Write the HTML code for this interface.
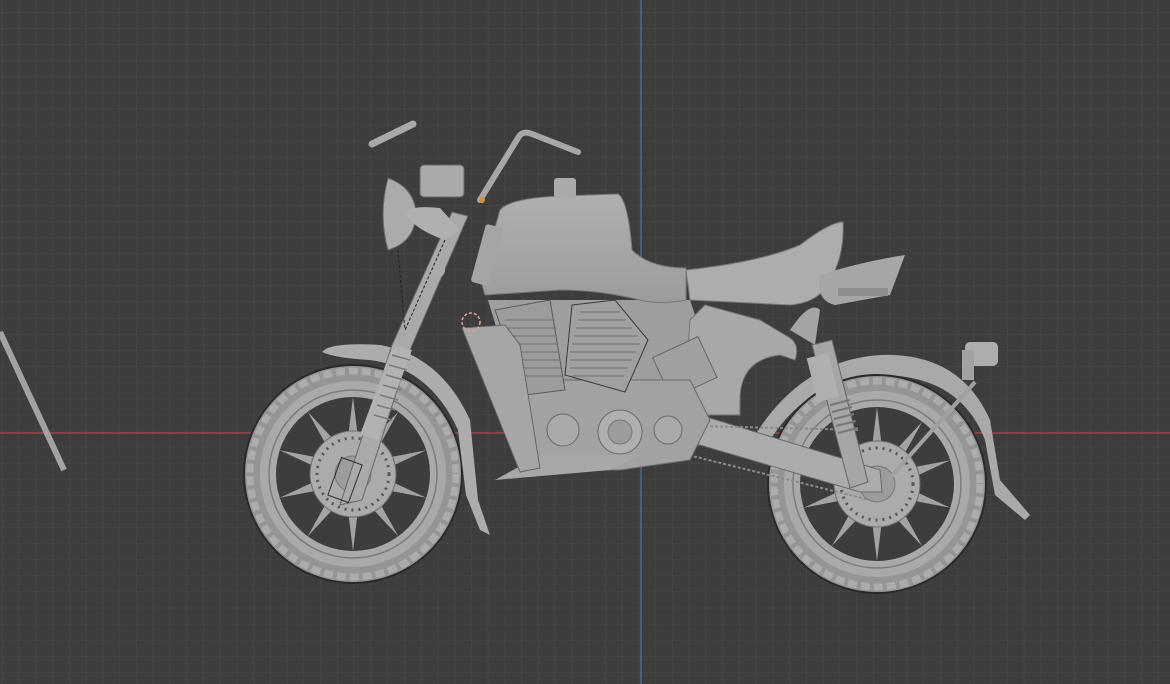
<!DOCTYPE html>
<html><head><meta charset="utf-8"><style>
html,body{margin:0;padding:0;background:#3d3d3d;overflow:hidden}
svg{display:block}
</style></head><body>
<svg width="1170" height="684" viewBox="0 0 1170 684" xmlns="http://www.w3.org/2000/svg">
<defs>
<pattern id="g" x="2" y="12" width="16.75" height="16.1" patternUnits="userSpaceOnUse">
<path d="M0 0H16.75M0 0V16.1" stroke="#484848" stroke-width="1.2" fill="none"/>
</pattern>
<linearGradient id="tk" x1="0" y1="0" x2="0" y2="1"><stop offset="0" stop-color="#b0b0b0"/><stop offset="1" stop-color="#9c9c9c"/></linearGradient>
<g id="wheel">
<circle r="109" fill="#959595" stroke="#2a2a2a" stroke-width="2"/>
<circle r="103" fill="none" stroke="#acacac" stroke-width="7" stroke-dasharray="9 4"/>
<circle r="93" fill="#a9a9a9"/>
<circle r="84" fill="none" stroke="#7c7c7c" stroke-width="1.5"/>
<circle r="77" fill="#3d3d3d"/>
<g fill="#a3a3a3">
<path d="M-7 -20 L0 -77 L7 -20Z"/><path d="M-7 -20 L0 -77 L7 -20Z" transform="rotate(36)"/>
<path d="M-7 -20 L0 -77 L7 -20Z" transform="rotate(72)"/><path d="M-7 -20 L0 -77 L7 -20Z" transform="rotate(108)"/>
<path d="M-7 -20 L0 -77 L7 -20Z" transform="rotate(144)"/><path d="M-7 -20 L0 -77 L7 -20Z" transform="rotate(180)"/>
<path d="M-7 -20 L0 -77 L7 -20Z" transform="rotate(216)"/><path d="M-7 -20 L0 -77 L7 -20Z" transform="rotate(252)"/>
<path d="M-7 -20 L0 -77 L7 -20Z" transform="rotate(288)"/><path d="M-7 -20 L0 -77 L7 -20Z" transform="rotate(324)"/>
</g>
<circle r="43" fill="#ababab" stroke="#6e6e6e"/>
<circle r="36" fill="none" stroke="#555" stroke-width="3" stroke-dasharray="2 5"/>
<circle r="18" fill="#9c9c9c" stroke="#777"/>
</g>
</defs>
<rect width="1170" height="684" fill="#3d3d3d"/>
<rect width="1170" height="684" fill="url(#g)"/>
<line x1="0" y1="433" x2="1170" y2="433" stroke="#9a4650" stroke-width="1.5"/>
<line x1="641" y1="0" x2="641" y2="684" stroke="#4b6a9e" stroke-width="1.5"/>
<line x1="0" y1="332" x2="64" y2="470" stroke="#a2a2a2" stroke-width="6"/>

<!-- rear fender -->
<path d="M752 440 Q800 360 880 355 Q960 352 990 420 L1000 480 L1030 515 L1025 520 L995 495 L985 440 Q960 375 880 375 Q810 378 770 440Z" fill="#a9a9a9"/>
<use href="#wheel" x="877" y="484"/>
<use href="#wheel" x="353" y="474"/>
<!-- front fender -->
<path d="M322 352 Q330 342 380 345 Q440 355 470 420 L478 500 L490 535 L480 530 L466 495 L458 430 Q430 368 370 360 Q335 358 322 352Z" fill="#acacac"/>

<!-- tail light -->
<rect x="965" y="342" width="33" height="24" rx="5" fill="#adadad"/>
<rect x="962" y="350" width="12" height="30" fill="#a2a2a2"/>
<line x1="975" y1="382" x2="888" y2="480" stroke="#a0a0a0" stroke-width="4"/>

<!-- frame fill behind engine -->
<path d="M488 300 L690 300 L700 330 L690 415 L700 440 L650 460 L600 470 L540 470 L500 340Z" fill="#9e9e9e"/>
<!-- swingarm -->
<path d="M650 420 L700 415 L880 470 L882 492 L860 492 L700 445 L655 445Z" fill="#acacac" stroke="#6a6a6a"/>
<path d="M660 425 L860 430 M660 448 L870 500" stroke="#8a8a8a" stroke-width="2" stroke-dasharray="3 2"/>
<!-- rear shock -->
<path d="M812 345 L832 340 L868 482 L850 488Z" fill="#a6a6a6" stroke="#666"/>
<rect x="812" y="355" width="22" height="45" fill="#b0b0b0" transform="rotate(-14 823 378)"/>
<path d="M830 405 L850 400 M832 412 L852 407 M834 419 L854 414 M836 426 L856 421 M838 433 L858 428" stroke="#777" stroke-width="2"/>

<!-- side panel -->
<path d="M705 305 L760 320 L790 338 Q800 345 795 360 L780 355 Q740 360 740 400 L740 415 L705 415 L685 395 L690 320Z" fill="#a8a8a8" stroke="#747474"/>
<path d="M790 330 Q810 300 820 310 L815 345 Z" fill="#a4a4a4"/>
<rect x="660" y="345" width="50" height="45" fill="#a0a0a0" stroke="#666" transform="rotate(-25 685 368)"/>

<!-- engine -->
<path d="M515 380 L690 380 L710 420 L690 460 L620 470 L545 470 L520 440Z" fill="#a2a2a2" stroke="#6a6a6a"/>
<path d="M495 310 L550 300 L565 390 L525 395Z" fill="#9c9c9c" stroke="#5a5a5a"/>
<path d="M572 305 L615 300 L648 340 L625 392 L565 375Z" fill="#a0a0a0" stroke="#3a3a3a"/>
<g stroke="#7a7a7a" stroke-width="1.2">
<path d="M505 320H555M505 328H556M506 336H557M507 344H558M508 352H559M509 360H560M510 368H561M512 376H562"/>
<path d="M580 312H620M578 320H626M576 328H632M574 336H638M572 344H640M570 352H636M570 360H632M570 368H628M572 376H624"/>
</g>
<circle cx="563" cy="430" r="16" fill="#aaa" stroke="#6a6a6a"/>
<circle cx="620" cy="432" r="22" fill="#b0b0b0" stroke="#6a6a6a"/>
<circle cx="620" cy="432" r="12" fill="#9c9c9c" stroke="#777"/>
<circle cx="668" cy="430" r="14" fill="#aaa" stroke="#6a6a6a"/>
<path d="M495 480 L540 455 L640 455 L610 470 Z" fill="#a8a8a8"/>
<!-- downtube panel -->
<path d="M462 328 L505 325 L520 345 L540 468 L520 472 Z" fill="#a6a6a6" stroke="#666"/>

<!-- tank -->
<path d="M500 210 Q510 198 560 196 L618 194 Q628 200 632 250 Q650 268 686 268 L686 300 Q660 305 640 300 Q600 290 560 290 L485 295 Q476 270 490 245 Z" fill="url(#tk)" stroke="#777"/>
<rect x="554" y="178" width="22" height="20" rx="3" fill="#aaa"/>
<rect x="478" y="225" width="18" height="60" rx="3" fill="#a5a5a5" transform="rotate(15 487 255)"/>
<!-- seat -->
<path d="M686 270 Q760 262 800 245 Q830 222 843 222 Q845 260 825 288 Q815 303 790 305 L690 300 Z" fill="#adadad" stroke="#777"/>
<!-- exhaust -->
<path d="M820 275 Q860 262 905 255 L890 295 L835 305 Q815 300 820 275Z" fill="#a6a6a6"/>
<rect x="838" y="288" width="50" height="8" fill="#8e8e8e"/>

<!-- fork -->
<path d="M452 212 L468 216 L410 350 L362 500 L340 505 L392 345Z" fill="#a9a9a9" stroke="#666"/>
<path d="M393 345 L412 350 L378 440 L360 435Z" fill="#b2b2b2"/>
<g stroke="#7a7a7a" stroke-width="1.5"><path d="M392 355 L410 360M389 365 L407 370M386 375 L404 380M383 385 L401 390M380 395 L398 400M377 405 L395 410M374 415 L392 420"/></g>
<rect x="334" y="460" width="22" height="40" fill="none" stroke="#2e2e2e" transform="rotate(20 345 480)"/>
<circle cx="437" cy="270" r="8" fill="#aaa"/>
<!-- headlight -->
<path d="M388 178 Q415 188 416 214 Q415 242 388 250 Q378 215 388 178Z" fill="#ababab" stroke="#666"/>
<path d="M405 213 Q410 205 440 208 L460 230 L445 240 Q415 230 405 213Z" fill="#b0b0b0"/>
<rect x="420" y="165" width="44" height="32" rx="4" fill="#aaa" stroke="#666"/>
<!-- handlebar -->
<path d="M480 200 L518 138 Q522 130 532 134 L578 152" fill="none" stroke="#a7a7a7" stroke-width="6" stroke-linecap="round"/>
<circle cx="482" cy="200" r="3" fill="#e0902a"/>
<line x1="372" y1="144" x2="413" y2="124" stroke="#a9a9a9" stroke-width="7" stroke-linecap="round"/>
<circle cx="471" cy="322" r="9" fill="none" stroke="#e0a0a0" stroke-width="1.5" stroke-dasharray="3 2"/>
<path d="M398 250 L405 330 M445 240 L405 330" stroke="#222" stroke-width="1" stroke-dasharray="3 2"/>
</svg>
</body></html>
